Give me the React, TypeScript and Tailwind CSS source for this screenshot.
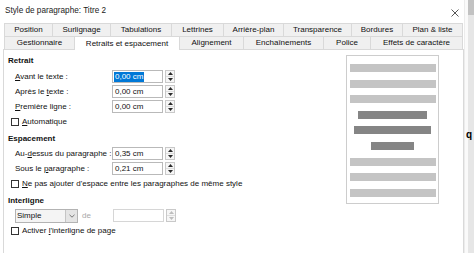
import React from "react";

const F = "font-['Liberation_Sans',Arial,sans-serif]";

function Spin({ disabled }: { disabled?: boolean }) {
  const c = disabled ? "#bdbdbd" : "#2a2a2a";
  return (
    <div className="ml-[2px] w-[10px] h-[13px] border border-[#c9c9c9] bg-[#f6f6f6] flex flex-col">
      <div className="flex-1 flex items-center justify-center border-b border-[#dedede]">
        <svg width="5" height="3" viewBox="0 0 5 3">
          <path d="M0 3 L2.5 0 L5 3Z" fill={c} />
        </svg>
      </div>
      <div className="flex-1 flex items-center justify-center">
        <svg width="5" height="3" viewBox="0 0 5 3">
          <path d="M0 0 L2.5 3 L5 0Z" fill={c} />
        </svg>
      </div>
    </div>
  );
}

function Input({ value, selected, disabled }: { value: string; selected?: boolean; disabled?: boolean }) {
  return (
    <div className="flex items-center">
      <div
        className={
          "w-[51px] h-[13px] border bg-white flex items-center pl-[1px] " +
          (disabled ? "border-[#d6d6d6]" : "border-[#b9b9b9]")
        }
      >
        {selected ? (
          <span className="bg-[#0078d7] text-white leading-[10px] px-[1px]">{value}</span>
        ) : (
          <span className="px-[1px]">{value}</span>
        )}
      </div>
      <Spin disabled={disabled} />
    </div>
  );
}

function Field({ label, value, selected }: { label: React.ReactNode; value: string; selected?: boolean }) {
  return (
    <div className="h-[15px] flex items-center">
      <div className="w-[108px] pl-[11px] whitespace-nowrap">{label}</div>
      <Input value={value} selected={selected} />
    </div>
  );
}

function Check({ children }: { children: React.ReactNode }) {
  return (
    <div className="h-[15px] flex items-center pl-[7px]">
      <div className="w-[8px] h-[8px] border border-[#333] bg-white mr-[3px]" />
      <span className="whitespace-nowrap">{children}</span>
    </div>
  );
}

function U({ children }: { children: React.ReactNode }) {
  return <span className="underline underline-offset-[1px]">{children}</span>;
}

const row1: [string, number][] = [
  ["Position", 48],
  ["Surlignage", 58],
  ["Tabulations", 61],
  ["Lettrines", 52],
  ["Arrière-plan", 60],
  ["Transparence", 68],
  ["Bordures", 51],
  ["Plan & liste", 61],
];

const row2: [string, number][] = [
  ["Gestionnaire", 70],
  ["Retraits et espacement", 106],
  ["Alignement", 63],
  ["Enchaînements", 80],
  ["Police", 47],
  ["Effets de caractère", 93],
];

function Bar({ w, dark }: { w: number; dark?: boolean }) {
  return (
    <div
      className={"h-[8px] " + (dark ? "bg-[#858585]" : "bg-[#c4c4c4]")}
      style={{ width: w }}
    />
  );
}

export default function App() {
  return (
    <div className={"w-[474px] h-[253px] overflow-hidden bg-white flex text-[8px] text-[#111] " + F}>
      <div className="w-[464px] h-full flex flex-col">
        {/* title bar */}
        <div className="h-[21px] flex items-start justify-between">
          <span className="pl-[5px] pt-[5px] text-[8.2px] text-[#1b1b1b]">Style de paragraphe: Titre 2</span>
          <svg width="8" height="8" viewBox="0 0 8 8" className="mr-[5px] mt-[9px]">
            <path d="M0.5 0.5 L7.5 7.5 M7.5 0.5 L0.5 7.5" stroke="#444" strokeWidth="0.9" />
          </svg>
        </div>
        {/* tabs */}
        <div className="h-[2px]" />
        <div className="flex h-[13px] ml-[4px]">
          {row1.map(([t, w], i) => (
            <div
              key={t}
              className={
                "h-full flex items-center justify-center bg-[#f0f0f0] border-t border-l border-[#d9d9d9] whitespace-nowrap " +
                (i === row1.length - 1 ? "border-r" : "")
              }
              style={{ width: w }}
            >
              {t}
            </div>
          ))}
        </div>
        <div className="flex h-[13px] ml-[4px] items-end">
          {row2.map(([t, w], i) =>
            i === 1 ? (
              <div
                key={t}
                className="h-[14px] mb-[-1px] relative z-10 flex items-center justify-center bg-white border-t border-l border-r border-[#d9d9d9] whitespace-nowrap"
                style={{ width: w }}
              >
                {t}
              </div>
            ) : (
              <div
                key={t}
                className={
                  "h-full flex items-center justify-center bg-[#f0f0f0] border-t border-l border-[#d9d9d9] whitespace-nowrap " +
                  (i === row2.length - 1 ? "border-r" : "") +
                  (i === 2 ? " border-l-0" : "")
                }
                style={{ width: w }}
              >
                {t}
              </div>
            )
          )}
        </div>
        {/* panel */}
        <div className="ml-[3px] w-[461px] flex-1 border-t border-l border-r border-[#d9d9d9] bg-white flex">
          <div className="w-[342px] flex flex-col pt-[5px]">
            <div className="h-[11px] flex items-center pl-[4px] font-bold">Retrait</div>
            <div className="h-[3px]" />
            <Field label={<><U>A</U>vant le texte :</>} value="0,00 cm" selected />
            <Field label={<>Après le <U>t</U>exte :</>} value="0,00 cm" />
            <Field label={<><U>P</U>remière ligne :</>} value="0,00 cm" />
            <Check>
              <U>A</U>utomatique
            </Check>
            <div className="h-[3px]" />
            <div className="h-[14px] flex items-center pl-[4px] font-bold">Espacement</div>
            <Field label={<>Au-<U>d</U>essus du paragraphe :</>} value="0,35 cm" />
            <Field label={<>Sous le <U>p</U>aragraphe :</>} value="0,21 cm" />
            <Check>
              <U>N</U>e pas ajouter d'espace entre les paragraphes de même style
            </Check>
            <div className="h-[3px]" />
            <div className="h-[13px] flex items-center pl-[4px] font-bold">Interligne</div>
            <div className="h-[1px]" />
            <div className="h-[15px] flex items-center">
              <div className="w-[109px] pl-[11px] flex items-center">
                <div className="w-[63px] h-[14px] border border-[#b3b3b3] bg-[#f4f4f4] flex items-center">
                  <span className="flex-1 pl-[1px]">Simple</span>
                  <div className="w-[12px] h-full bg-[#e4e4e4] border-l border-[#c4c4c4] flex items-center justify-center">
                    <svg width="6" height="4" viewBox="0 0 6 4">
                      <path d="M0.5 0.8 L3 3.2 L5.5 0.8" stroke="#6a6a6a" strokeWidth="0.9" fill="none" />
                    </svg>
                  </div>
                </div>
                <span className="ml-[4px] text-[#a8a8a8]">de</span>
              </div>
              <Input value="" disabled />
            </div>
            <Check>
              Activer <U>l</U>'interligne de page
            </Check>
          </div>
          <div className="pt-[5px]">
            <div className="w-[93px] h-[149px] border border-[#cdcdcd] bg-white flex flex-col items-center pt-[8px] gap-[7.6px]">
              <Bar w={86} />
              <Bar w={86} />
              <Bar w={86} />
              <Bar w={69} dark />
              <Bar w={77} dark />
              <Bar w={43} dark />
              <Bar w={86} />
              <Bar w={86} />
              <Bar w={86} />
            </div>
          </div>
        </div>
      </div>
      {/* background window edge */}
      <div className="w-[10px] h-full flex relative">
        <div className="w-[4px] h-full bg-[#fafafa] border-l border-[#ececec]" />
        <div className="w-[6px] h-full bg-[#e6e6e6] flex flex-col">
          <div className="h-[15px] bg-[#c2c2c2]" />
        </div>
        <span className="absolute left-[2px] top-[130px] font-bold text-[10px] text-black leading-none">q</span>
      </div>
    </div>
  );
}
